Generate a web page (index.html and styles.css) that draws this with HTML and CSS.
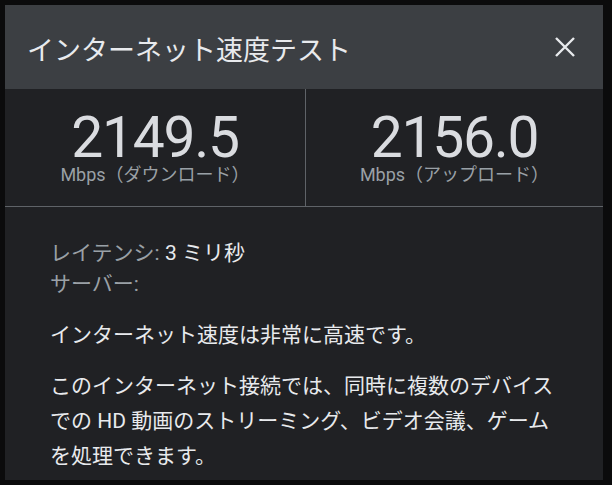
FILE: index.html
```html
<!DOCTYPE html>
<html lang="ja">
<head>
<meta charset="utf-8">
<link rel="stylesheet" href="styles.css">
</head>
<body>
<div class="page">
  <div class="dialog">
    <div class="header">
      <div class="title">インターネット速度テスト</div>
      <svg class="close" width="22" height="22" viewBox="0 0 22 22"><path d="M2 2 L20 20 M20 2 L2 20" stroke="#e8eaed" stroke-width="2.4" fill="none"/></svg>
    </div>
    <div class="stats">
      <div class="stat">
        <div class="num">2149.5</div>
        <div class="unit">Mbps（ダウンロード）</div>
      </div>
      <div class="stat">
        <div class="num">2156.0</div>
        <div class="unit">Mbps（アップロード）</div>
      </div>
    </div>
    <div class="info">
      <div class="meta"><span class="label">レイテンシ:</span> <span class="value">3 ミリ秒</span></div>
      <div class="meta"><span class="label">サーバー:</span></div>
      <p class="verdict">インターネット速度は非常に高速です。</p>
      <p class="desc">このインターネット接続では、同時に複数のデバイス<br>での HD 動画のストリーミング、ビデオ会議、ゲーム<br>を処理できます。</p>
    </div>
  </div>
</div>
</body>
</html>
```
FILE: styles.css
```css
html, body {
  margin: 0;
  padding: 0;
  background: #0b0b0c;
}
body {
  font-family: Roboto, "Noto Sans CJK JP", sans-serif;
  color: #e8eaed;
}
.page {
  padding: 5px 9px 5px 5px;
  width: 598px;
  height: 475px;
}
.dialog {
  width: 598px;
  height: 475px;
  background: #202124;
  overflow: hidden;
}
.header {
  height: 84px;
  background: #3c3f43;
  display: flex;
  align-items: center;
  justify-content: space-between;
  padding: 0 27px 0 22px;
}
.title {
  font-size: 27px;
  color: #e8eaed;
  font-family: "Noto Sans CJK JP", sans-serif;
  padding-top: 2px;
}
.close {
  display: block;
}
.stats {
  display: grid;
  grid-template-columns: 300px 298px;
  height: 117px;
  border-bottom: 1px solid #5f6368;
}
.stat {
  text-align: center;
  padding-top: 22px;
}
.stat + .stat {
  border-left: 1px solid #5f6368;
}
.num {
  font-family: Roboto, "Liberation Sans", sans-serif;
  font-size: 57px;
  line-height: 54px;
  color: #dadce0;
  letter-spacing: -1.3px;
}
.unit {
  font-family: Roboto, "Noto Sans CJK JP", sans-serif;
  font-size: 18px;
  line-height: 20px;
  color: #9aa0a6;
}
.info {
  padding: 31px 45px 0 45px;
  font-family: Roboto, "Noto Sans CJK JP", sans-serif;
  font-size: 21px;
}
.meta {
  line-height: 31px;
}
.label {
  color: #9aa0a6;
}
.value {
  color: #e8eaed;
}
.verdict {
  margin: 20px 0 0 0;
  line-height: 31px;
}
.desc {
  margin: 18px 0 0 0;
  line-height: 35px;
}
```
